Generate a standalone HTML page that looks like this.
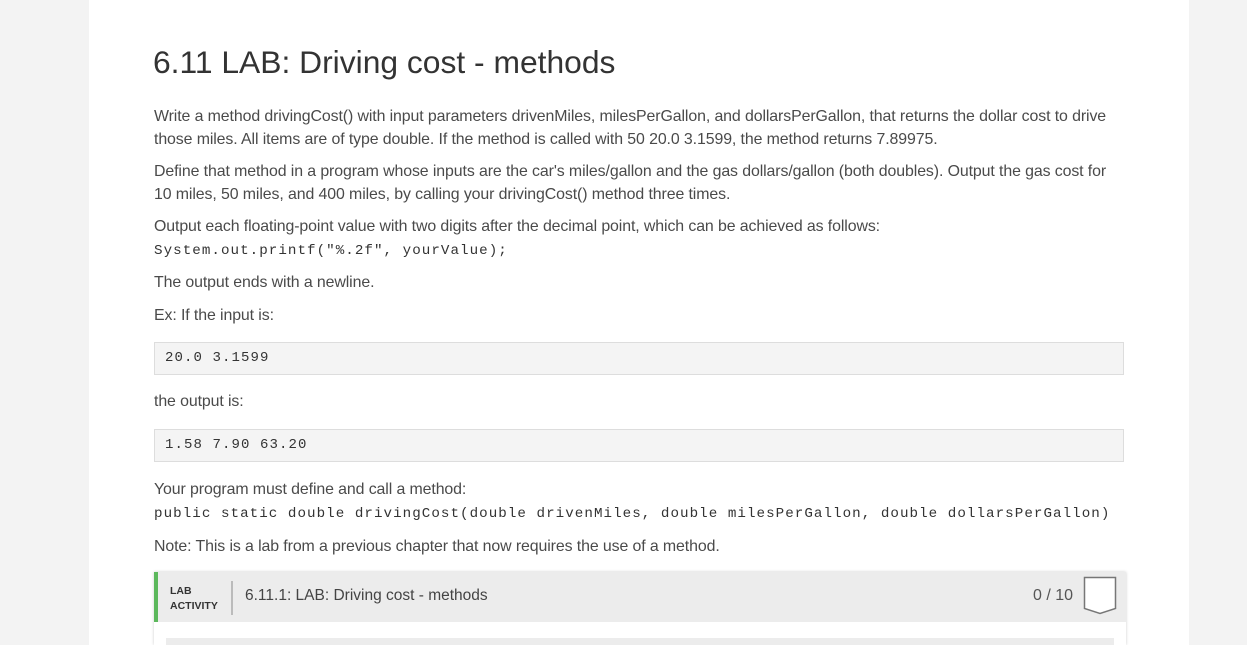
<!DOCTYPE html>
<html><head><meta charset="utf-8"><style>
body{margin:0;background:#f3f3f3;width:1247px;height:645px;overflow:hidden;font-family:"Liberation Sans",sans-serif;color:#4a4a4a}
.page{position:absolute;left:89px;top:0;width:1100px;height:645px;background:#fff}
.a{position:absolute;left:154px;font-size:15.9px;line-height:23px;white-space:nowrap;letter-spacing:-0.1px}
h1{position:absolute;left:153px;top:40px;margin:0;font-weight:normal;font-size:31.8px;color:#333;line-height:44px}
.m{font-family:"Liberation Mono",monospace;font-size:14.2px;letter-spacing:1.05px;color:#333}
.box{position:absolute;left:154px;width:968px;height:31px;background:#f4f4f4;border:1px solid #ddd;font-family:"Liberation Mono",monospace;font-size:14px;letter-spacing:1.1px;line-height:31px;color:#333;text-indent:10px}
</style></head><body>
<div class="page"></div>
<h1>6.11 LAB: Driving cost - methods</h1>
<div class="a" style="top:105px">Write a method drivingCost() with input parameters drivenMiles, milesPerGallon, and dollarsPerGallon, that returns the dollar cost to drive<br>those miles. All items are of type double. If the method is called with 50 20.0 3.1599, the method returns 7.89975.</div>
<div class="a" style="top:160px">Define that method in a program whose inputs are the car's miles/gallon and the gas dollars/gallon (both doubles). Output the gas cost for<br>10 miles, 50 miles, and 400 miles, by calling your drivingCost() method three times.</div>
<div class="a" style="top:215px">Output each floating-point value with two digits after the decimal point, which can be achieved as follows:<br><span class="m">System.out.printf("%.2f", yourValue);</span></div>
<div class="a" style="top:271px">The output ends with a newline.</div>
<div class="a" style="top:304px">Ex: If the input is:</div>
<div class="box" style="top:342px">20.0 3.1599</div>
<div class="a" style="top:390px">the output is:</div>
<div class="box" style="top:429px">1.58 7.90 63.20</div>
<div class="a" style="top:478px">Your program must define and call a method:<br><span class="m">public static double drivingCost(double drivenMiles, double milesPerGallon, double dollarsPerGallon)</span></div>
<div class="a" style="top:535px">Note: This is a lab from a previous chapter that now requires the use of a method.</div>
<div style="position:absolute;left:154px;top:572px;width:972px;height:73px;background:#fff;box-shadow:0 0 3px rgba(0,0,0,.2)"></div>
<div style="position:absolute;left:154px;top:572px;width:972px;height:50px;background:#ececec;border-left:4px solid #5cb85c;box-sizing:border-box"></div>
<div style="position:absolute;left:170px;top:584px;font-size:10.5px;font-weight:bold;line-height:15px;color:#333">LAB<br>ACTIVITY</div>
<div style="position:absolute;left:231px;top:581px;width:2px;height:34px;background:#bbb"></div>
<div style="position:absolute;left:245px;top:587px;font-size:15.5px;color:#444">6.11.1: LAB: Driving cost - methods</div>
<div style="position:absolute;left:1033px;top:587px;font-size:16px;color:#555">0 / 10</div>
<svg style="position:absolute;left:1083px;top:576px" width="34" height="40"><path d="M1.5 1.5H32.5V32.5L17 37.5L1.5 32.5Z" fill="#fff" stroke="#777" stroke-width="1.5"/></svg>
<div style="position:absolute;left:166px;top:638px;width:948px;height:7px;background:#ececec"></div>
</body></html>
